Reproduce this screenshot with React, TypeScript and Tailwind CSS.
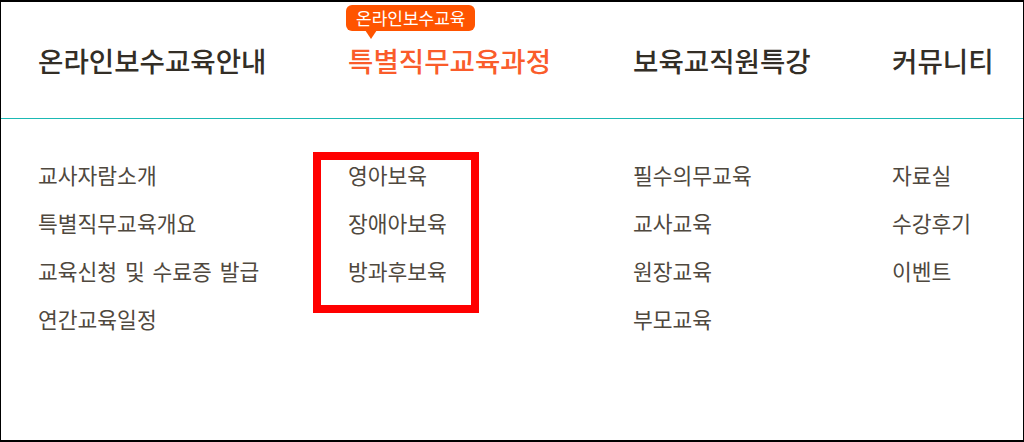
const MENUS = [
  {
    title: '온라인보수교육안내',
    items: ['교사자람소개', '특별직무교육개요', '교육신청 및 수료증 발급', '연간교육일정'],
  },
  {
    title: '특별직무교육과정',
    badge: '온라인보수교육',
    active: true,
    items: ['영아보육', '장애아보육', '방과후보육'],
  },
  {
    title: '보육교직원특강',
    items: ['필수의무교육', '교사교육', '원장교육', '부모교육'],
  },
  {
    title: '커뮤니티',
    items: ['자료실', '수강후기', '이벤트'],
  },
]

const FONT = "font-['Noto_Sans_CJK_KR','Noto_Sans',sans-serif]"

export default function App() {
  return (
    <div
      className={`relative h-[442px] w-[1024px] overflow-hidden border-x border-y-2 border-black bg-white ${FONT}`}
    >
      {/* top level menu */}
      <nav className="grid h-[116px] grid-cols-[310px_285px_259px_1fr] items-center pl-[37px] pt-[3px]">
        {MENUS.map((menu) => (
          <div key={menu.title} className="relative">
            {menu.badge && (
              <span className="absolute -top-[42px] left-[-2px] flex h-[26px] items-center rounded-[6px] bg-[#ff5400] px-[10px] text-[17px] leading-none text-white">
                {menu.badge}
                <span className="absolute -bottom-[8px] left-[19px] h-0 w-0 border-x-[6px] border-t-[9px] border-x-transparent border-t-[#ff5400]" />
              </span>
            )}
            <span
              className={`text-[27.6px] font-medium leading-none ${
                menu.active ? 'text-[#fa5c2b]' : 'text-[#332e26]'
              }`}
            >
              {menu.title}
            </span>
          </div>
        ))}
      </nav>

      <div className="h-px bg-[#1bb9b4]" />

      {/* sub menus */}
      <div className="grid grid-cols-[310px_285px_259px_1fr] pl-[37px] pt-[32px]">
        {MENUS.map((menu) => (
          <ul key={menu.title} className="flex flex-col">
            {menu.items.map((item) => (
              <li key={item} className="text-[21.5px] leading-[48px] text-[#4f483e] [word-spacing:3px]">
                {item}
              </li>
            ))}
          </ul>
        ))}
      </div>

      {/* highlight annotation */}
      <div className="absolute left-[312px] top-[150px] h-[161px] w-[166px] border-[8px] border-[#ff0000]" />
    </div>
  )
}
